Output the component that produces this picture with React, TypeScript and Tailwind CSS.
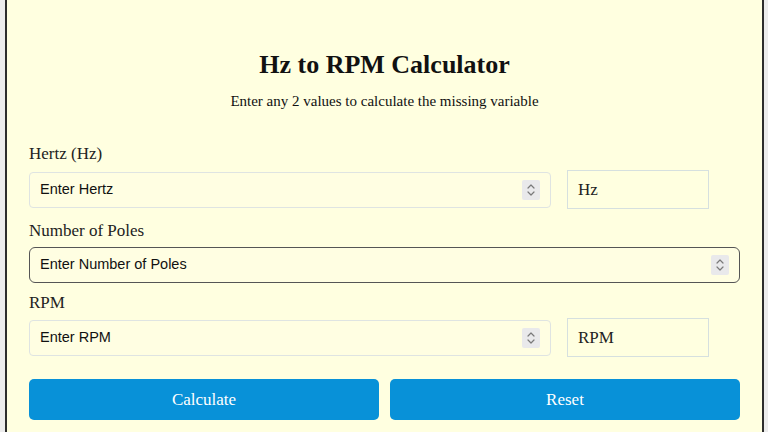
import React from "react";

function Spinner() {
  return (
    <div className="flex h-[20px] w-[18px] items-center justify-center rounded-[2px] bg-[#e9e9eb]">
      <svg width="10" height="16" viewBox="0 0 10 16" fill="none" stroke="#7a7a7a" strokeWidth="1.2" strokeLinecap="round" strokeLinejoin="round">
        <path d="M2 6 L5 3 L8 6" />
        <path d="M2 10 L5 13 L8 10" />
      </svg>
    </div>
  );
}

function NumberField({ placeholder, focused }: { placeholder: string; focused?: boolean }) {
  return (
    <div
      className={`flex h-[36px] flex-1 items-center justify-between bg-[#fffee2] pl-[10px] pr-[10px] ${
        focused ? "rounded-[6px] border border-[#555]" : "rounded-[4px] border border-[#dfe4e2]"
      }`}
    >
      <span className="font-['Liberation_Sans',Arial,sans-serif] text-[14.5px] text-[#111]">{placeholder}</span>
      <Spinner />
    </div>
  );
}

function UnitBox({ unit }: { unit: string }) {
  return (
    <div className="flex h-[39px] w-[142px] items-center border border-[#d6e0df] px-[10px] text-[17px] text-[#222]">
      {unit}
    </div>
  );
}

export default function App() {
  return (
    <div className="h-[432px] overflow-hidden bg-[#ececec] pl-[5px] font-['Liberation_Serif','Times_New_Roman',serif]">
      <div className="h-full w-[759px] border-x-[2px] border-[#2c2c2c] bg-[#ffffe0] px-[22px] pt-[48px]">
        <h1 className="text-center text-[26px] font-bold leading-[34px] text-[#111]">Hz to RPM Calculator</h1>
        <p className="mt-[10px] text-center text-[15px] leading-[18px] text-[#111]">
          Enter any 2 values to calculate the missing variable
        </p>

        <div className="mt-[34px] text-[17px] leading-[20px] text-[#222]">Hertz (Hz)</div>
        <div className="mt-[6px] flex items-center gap-[16px] pr-[31px]">
          <NumberField placeholder="Enter Hertz" />
          <UnitBox unit="Hz" />
        </div>

        <div className="mt-[12px] text-[17px] leading-[20px] text-[#222]">Number of Poles</div>
        <div className="mt-[6px] flex">
          <NumberField placeholder="Enter Number of Poles" focused />
        </div>

        <div className="mt-[10px] text-[17px] leading-[20px] text-[#222]">RPM</div>
        <div className="mt-[5px] flex items-center gap-[16px] pr-[31px]">
          <NumberField placeholder="Enter RPM" />
          <UnitBox unit="RPM" />
        </div>

        <div className="mt-[22px] flex gap-[11px]">
          <button className="h-[41px] flex-1 rounded-[5px] bg-[#0891d8] text-[17px] text-white">Calculate</button>
          <button className="h-[41px] flex-1 rounded-[5px] bg-[#0891d8] text-[17px] text-white">Reset</button>
        </div>
      </div>
    </div>
  );
}
